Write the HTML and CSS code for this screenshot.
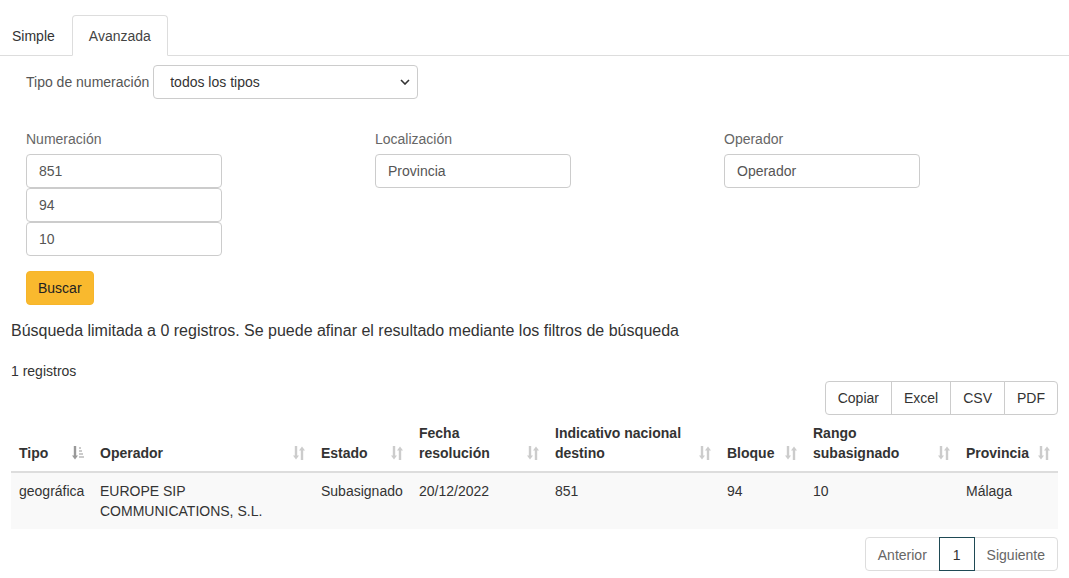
FILE: index.html
```html
<!DOCTYPE html>
<html lang="es">
<head>
    <meta charset="UTF-8">
    <meta name="viewport" content="width=device-width, initial-scale=1.0">
    <title>Búsqueda de numeración</title>
    <link rel="stylesheet" href="styles.css">
</head>
<body>
    <ul class="nav-tabs">
        <li class="tab tab-first">Simple</li>
        <li class="tab active">Avanzada</li>
    </ul>

    <div class="container">
        <div class="type-row">
            <label class="type-label" for="tipo">Tipo de numeración</label>
            <div class="select-wrap">
                <select id="tipo" class="form-select">
                    <option>todos los tipos</option>
                </select>
                <svg class="chevron" viewBox="0 0 10 6" width="10" height="6"><path d="M1 1l4 4 4-4" fill="none" stroke="#333" stroke-width="1.6"/></svg>
            </div>
        </div>

        <div class="filters">
            <div class="col">
                <label class="field-label">Numeración</label>
                <div class="stack">
                    <input class="form-control" value="851">
                    <input class="form-control" value="94">
                    <input class="form-control" value="10">
                </div>
                <button class="btn-search">Buscar</button>
            </div>
            <div class="col">
                <label class="field-label">Localización</label>
                <input class="form-control" value="Provincia">
            </div>
            <div class="col">
                <label class="field-label">Operador</label>
                <input class="form-control" value="Operador">
            </div>
        </div>
    </div>

    <div class="results">
        <p class="notice">Búsqueda limitada a 0 registros. Se puede afinar el resultado mediante los filtros de búsqueda</p>
        <p class="count">1 registros</p>

        <div class="export">
            <div class="btn-group">
                <button class="btn">Copiar</button>
                <button class="btn">Excel</button>
                <button class="btn">CSV</button>
                <button class="btn">PDF</button>
            </div>
        </div>

        <table class="data-table">
            <colgroup>
                <col style="width:81px">
                <col style="width:221px">
                <col style="width:98px">
                <col style="width:136px">
                <col style="width:172px">
                <col style="width:86px">
                <col style="width:153px">
                <col style="width:100px">
            </colgroup>
            <thead>
                <tr>
                    <th class="sorted">Tipo</th>
                    <th>Operador</th>
                    <th>Estado</th>
                    <th>Fecha<br>resolución</th>
                    <th>Indicativo nacional<br>destino</th>
                    <th>Bloque</th>
                    <th>Rango<br>subasignado</th>
                    <th>Provincia</th>
                </tr>
            </thead>
            <tbody>
                <tr>
                    <td>geográfica</td>
                    <td>EUROPE SIP<br>COMMUNICATIONS, S.L.</td>
                    <td>Subasignado</td>
                    <td>20/12/2022</td>
                    <td>851</td>
                    <td>94</td>
                    <td>10</td>
                    <td>Málaga</td>
                </tr>
            </tbody>
        </table>

        <div class="pager">
            <div class="pagination">
                <span class="page">Anterior</span>
                <span class="page current">1</span>
                <span class="page">Siguiente</span>
            </div>
        </div>
    </div>
</body>
</html>
```

FILE: styles.css
```css
* {
    margin: 0;
    padding: 0;
    box-sizing: border-box;
}

body {
    font-family: 'Liberation Sans', Arial, sans-serif;
    font-size: 14px;
    line-height: 20px;
    color: #333;
    background: #fff;
}

/* Tabs */
.nav-tabs {
    list-style: none;
    display: flex;
    margin-top: 15px;
    border-bottom: 1px solid #ddd;
}

.tab {
    height: 41px;
    padding: 10px 16px 0;
    margin-bottom: -1px;
    border: 1px solid transparent;
    border-radius: 4px 4px 0 0;
    color: #333;
}

.tab-first {
    padding-left: 11px;
    padding-right: 16px;
}

.tab.active {
    border-color: #ddd;
    border-bottom-color: #fff;
    background: #fff;
    color: #444;
}

/* Form */
.container {
    padding: 0 26px;
}

.type-row {
    display: flex;
    align-items: center;
    gap: 4px;
    margin-top: 9px;
}

.type-label {
    color: #555;
}

.select-wrap {
    position: relative;
    width: 265px;
}

.form-select {
    width: 100%;
    height: 34px;
    padding: 0 16px;
    appearance: none;
    border: 1px solid #ccc;
    border-radius: 4px;
    background: #fff;
    font-family: inherit;
    font-size: 14px;
    color: #333;
}

.chevron {
    position: absolute;
    right: 8px;
    top: 14px;
}

.filters {
    display: flex;
    margin-top: 30px;
}

.col {
    flex: 0 0 349px;
}

.field-label {
    display: block;
    color: #666;
    margin-bottom: 5px;
}

.form-control {
    display: block;
    width: 196px;
    height: 34px;
    padding: 0 12px;
    border: 1px solid #ccc;
    border-radius: 4px;
    font-family: inherit;
    font-size: 14px;
    color: #555;
    background: #fff;
}

.btn-search {
    margin-top: 15px;
    height: 34px;
    padding: 0 11px;
    border: 1px solid #f7b52a;
    border-radius: 4px;
    background: #f9b92e;
    color: #222;
    font-family: inherit;
    font-size: 14px;
}

/* Results */
.results {
    padding: 0 11px;
}

.notice {
    font-size: 16px;
    line-height: 22px;
    margin-top: 15px;
}

.count {
    margin-top: 19px;
}

.export {
    display: flex;
    justify-content: flex-end;
}

.btn-group {
    display: flex;
}

.btn {
    height: 34px;
    padding: 0 12px;
    border: 1px solid #ccc;
    margin-left: -1px;
    background: #fff;
    font-family: inherit;
    font-size: 14px;
    color: #333;
}

.btn:first-child {
    border-radius: 4px 0 0 4px;
}

.btn:last-child {
    border-radius: 0 4px 4px 0;
}

.data-table {
    width: 100%;
    table-layout: fixed;
    border-collapse: collapse;
}

.data-table th {
    position: relative;
    text-align: left;
    vertical-align: bottom;
    padding: 8px 24px 8px 8px;
    font-weight: bold;
    border-bottom: 2px solid #ddd;
    white-space: nowrap;
}

.data-table th::after {
    content: "";
    position: absolute;
    right: 8px;
    bottom: 11px;
    width: 12px;
    height: 14px;
    background: url("data:image/svg+xml;utf8,<svg xmlns='http://www.w3.org/2000/svg' viewBox='0 0 12 14'><path d='M3 0v10' stroke='%23ccc' stroke-width='2.4'/><path d='M0 9.5h6L3 13.5z' fill='%23ccc'/><path d='M9 14V4' stroke='%23ccc' stroke-width='2.4'/><path d='M6 4.5h6L9 0.5z' fill='%23ccc'/></svg>") no-repeat;
}

.data-table th.sorted::after {
    background: url("data:image/svg+xml;utf8,<svg xmlns='http://www.w3.org/2000/svg' viewBox='0 0 12 14'><path d='M3 0v10' stroke='%23999' stroke-width='2.4'/><path d='M0 9.5h6L3 13.5z' fill='%23999'/><path d='M7 2h2M7 5h3M7 8h4M7 11h5' stroke='%23bbb' stroke-width='1.6'/></svg>") no-repeat;
}

.data-table td {
    padding: 8px;
    vertical-align: top;
    background: #f9f9f9;
}

.pager {
    display: flex;
    justify-content: flex-end;
    margin-top: 8px;
}

.pagination {
    display: flex;
}

.page {
    height: 34px;
    padding: 7px 12px;
    border: 1px solid #ddd;
    margin-left: -1px;
    color: #666;
}

.page:first-child {
    border-radius: 4px 0 0 4px;
}

.page:last-child {
    border-radius: 0 4px 4px 0;
}

.page.current {
    position: relative;
    border-color: #1f4a55;
    color: #333;
    padding: 7px 13px;
}
```
